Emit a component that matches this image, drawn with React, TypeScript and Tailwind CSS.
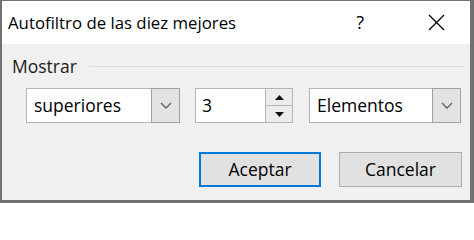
import React from "react";

const font = { fontFamily: '"Open Sans", "Noto Sans", sans-serif' };

function Chevron() {
    return (
        <svg width="12" height="7" viewBox="0 0 12 7">
            <path d="M1 1 L6 6 L11 1" fill="none" stroke="#5f5f5f" strokeWidth="1.3" />
        </svg>
    );
}

function Combo({ value, width }: { value: string; width: string }) {
    return (
        <div className={`flex h-[35px] ${width}`}>
            <div className="flex flex-1 items-center border border-r-0 border-[#b4b4b4] bg-white pl-[7px] text-[17.5px] text-[#000]">
                {value}
            </div>
            <div className="flex w-[29px] items-center justify-center border border-[#a2a2a2] bg-[#e3e3e3]">
                <Chevron />
            </div>
        </div>
    );
}

function Spinner() {
    return (
        <div className="flex h-[35px] w-[98px] border border-[#b4b4b4] bg-white">
            <div className="flex flex-1 items-center pl-[6px] text-[17.5px] text-[#000]">3</div>
            <div className="flex w-[27px] flex-col border-l border-[#b4b4b4]">
                <div className="flex flex-1 items-center justify-center border-b border-[#b4b4b4] bg-[#ececec]">
                    <svg width="9" height="5" viewBox="0 0 9 5">
                        <path d="M0 5 L4.5 0 L9 5 Z" fill="#111" />
                    </svg>
                </div>
                <div className="flex flex-1 items-center justify-center bg-[#ececec]">
                    <svg width="9" height="5" viewBox="0 0 9 5">
                        <path d="M0 0 L4.5 5 L9 0 Z" fill="#111" />
                    </svg>
                </div>
            </div>
        </div>
    );
}

export default function App() {
    return (
        <div
            className="flex h-[203px] w-[474px] flex-col bg-[#717171] pb-[3px] pl-[2px] pr-[4px] pt-[1px]"
            style={font}
        >
            <div className="flex h-[43px] shrink-0 items-center bg-white pl-[6px] text-[#000]">
                <span className="text-[16.8px]">Autofiltro de las diez mejores</span>
                <span className="ml-auto mr-[64px] text-[18px]">?</span>
                <svg className="mr-[25px]" width="17" height="17" viewBox="0 0 17 17">
                    <path d="M1 1 L16 16 M16 1 L1 16" stroke="#000" strokeWidth="1.3" />
                </svg>
            </div>
            <div className="flex flex-1 flex-col bg-[#f0f0f0]">
                <div className="mt-[10px] flex h-[24px] items-center pl-[10px] pr-[6px]">
                    <span className="text-[17.5px] text-[#1a1a1a]">Mostrar</span>
                    <div className="ml-[12px] h-px flex-1 bg-[#dcdcdc]" />
                </div>
                <div className="ml-[24px] mt-[10px] flex gap-[15px]">
                    <Combo value="superiores" width="w-[154px]" />
                    <Spinner />
                    <div className="ml-px">
                        <Combo value="Elementos" width="w-[152px]" />
                    </div>
                </div>
                <div className="mt-[29px] flex justify-end gap-[18px] pr-[8px]">
                    <button className="h-[35px] w-[122px] border-2 border-[#0078d7] bg-[#e1e1e1] text-[17.5px] text-[#000]">
                        Aceptar
                    </button>
                    <button className="h-[35px] w-[123px] border border-[#adadad] bg-[#e1e1e1] text-[17.5px] text-[#000]">
                        Cancelar
                    </button>
                </div>
            </div>
        </div>
    );
}
